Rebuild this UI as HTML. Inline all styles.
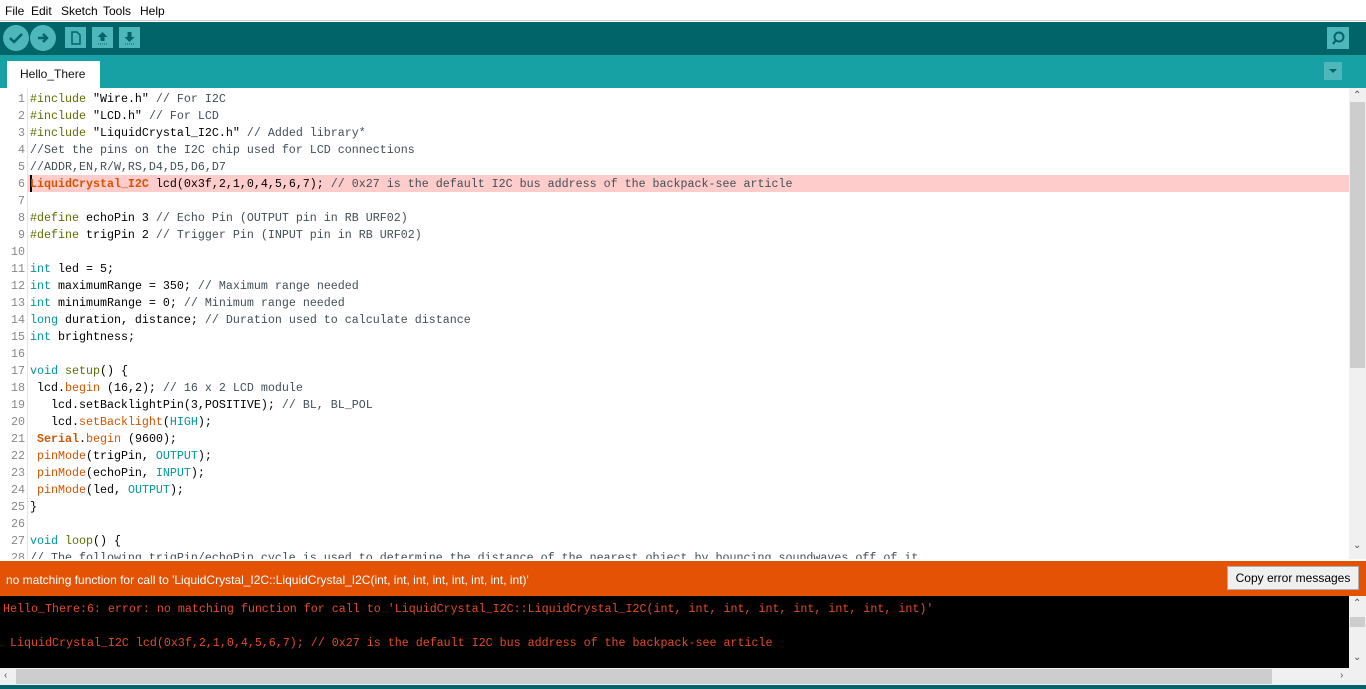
<!DOCTYPE html>
<html><head><meta charset="utf-8"><style>
*{margin:0;padding:0;box-sizing:border-box}
body{width:1366px;height:689px;overflow:hidden;background:#fff;font-family:"Liberation Sans",sans-serif;position:relative}
.menu{position:absolute;top:0;left:0;width:1366px;height:21px;background:#fff;border-bottom:1px solid #c9d3dc;font-size:12px;color:#000}
.menu span{position:absolute;top:4px}
.tb{position:absolute;top:22px;left:0;width:1366px;height:33px;background:#006468}
.tabs{position:absolute;top:55px;left:0;width:1366px;height:33px;background:#17a1a5}
.tab{position:absolute;left:7px;top:6px;width:93px;height:27px;background:#fff;font-size:12px;color:#111;padding:6px 0 0 13px}
.circ{position:absolute;top:3px;width:26px;height:26px;border-radius:50%;background:#4db7bb}
.sq{position:absolute;top:5px;width:21px;height:21px;background:#4db7bb}
.ed{position:absolute;top:88px;left:0;width:1349px;height:471px;overflow:hidden;font-family:"Liberation Mono",monospace;font-size:11.67px;color:#000}
.ln{position:absolute;left:0;width:25px;text-align:right;color:#888}
.gut{position:absolute;left:27px;top:0;width:1px;height:471px;background:#e5e5e5}
.l{position:absolute;left:30px;white-space:pre;height:17px;line-height:17px;margin-top:2px}
.hl{position:absolute;left:28px;top:87px;width:1321px;height:17px;background:#ffcccc}
.k{color:#00979c}.p{color:#5e6d03}.c{color:#434f54}.o{color:#d35400}.b{color:#d35400;font-weight:bold}
.vs{position:absolute;left:1349px;top:88px;width:17px;height:471px;background:#f0f0f0}
.err{position:absolute;top:561px;left:0;width:1366px;height:35px;background:#e35205;color:#fff;font-size:12px}
.btn{position:absolute;left:1227px;top:5px;width:132px;height:24px;background:#f0f0f0;border:1px solid #adadad;color:#000;font-size:12px;text-align:center;line-height:22px}
.con{position:absolute;top:596px;left:0;width:1349px;height:72px;background:#000;font-family:"Liberation Mono",monospace;font-size:11.67px;color:#e34c26;white-space:pre}
.cvs{position:absolute;top:596px;left:1349px;width:17px;height:72px;background:#f0f0f0}
.hs{position:absolute;top:668px;left:0;width:1366px;height:17px;background:#f0f0f0}
.bot{position:absolute;top:685px;left:0;width:1366px;height:4px;background:#006468}
.ar{position:absolute;font-size:10px;color:#555}
</style></head><body>
<div class="menu"><span style="left:5px">File</span><span style="left:31px">Edit</span><span style="left:61px">Sketch</span><span style="left:103px">Tools</span><span style="left:140px">Help</span></div>
<div class="tb">
<div class="circ" style="left:3px"><svg width="26" height="26"><path d="M7 13l4 4 8-8" stroke="#006468" stroke-width="2.5" fill="none"/></svg></div>
<div class="circ" style="left:30px"><svg width="26" height="26"><path d="M8 13h8M13 9l4 4-4 4" stroke="#006468" stroke-width="2.5" fill="none"/></svg></div>
<div class="sq" style="left:65px"><svg width="21" height="21"><path d="M7 5h5l3 3v9H7z" fill="none" stroke="#006468" stroke-width="1.5"/></svg></div>
<div class="sq" style="left:92px"><svg width="21" height="21"><path d="M10.5 5l5 5h-3v4h-4v-4h-3z" fill="#006468"/><path d="M6 17h9" stroke="#006468" stroke-dasharray="1 1"/></svg></div>
<div class="sq" style="left:119px"><svg width="21" height="21"><path d="M10.5 15l5-5h-3V5h-4v5h-3z" fill="#006468"/><path d="M6 17h9" stroke="#006468" stroke-dasharray="1 1"/></svg></div>
<div class="sq" style="left:1327px;width:22px;height:22px"><svg width="22" height="22"><circle cx="12" cy="10" r="4.5" fill="none" stroke="#006468" stroke-width="2"/><path d="M9 13l-3 4" stroke="#006468" stroke-width="2"/></svg></div>
</div>
<div class="tabs"><div class="tab">Hello_There</div>
<div class="sq" style="left:1324px;top:7px;width:18px;height:18px"><svg width="18" height="18"><path d="M5 7h8l-4 4z" fill="#006468"/></svg></div></div>
<div class="ed">
<div class="hl"></div><div class="gut"></div>
<div style="position:absolute;left:30px;top:87px;width:2px;height:17px;background:#000"></div>
<div class="ln" style="top:3px;line-height:17px">1<br>2<br>3<br>4<br>5<br>6<br>7<br>8<br>9<br>10<br>11<br>12<br>13<br>14<br>15<br>16<br>17<br>18<br>19<br>20<br>21<br>22<br>23<br>24<br>25<br>26<br>27<br>28</div>
<div class="l" style="top:1px"><span class="p">#include</span> "Wire.h" <span class="c">// For I2C</span></div>
<div class="l" style="top:18px"><span class="p">#include</span> "LCD.h" <span class="c">// For LCD</span></div>
<div class="l" style="top:35px"><span class="p">#include</span> "LiquidCrystal_I2C.h" <span class="c">// Added library*</span></div>
<div class="l c" style="top:52px">//Set the pins on the I2C chip used for LCD connections</div>
<div class="l c" style="top:69px">//ADDR,EN,R/W,RS,D4,D5,D6,D7</div>
<div class="l" style="top:86px"><span class="b">LiquidCrystal_I2C</span> lcd(0x3f,2,1,0,4,5,6,7); <span class="c">// 0x27 is the default I2C bus address of the backpack-see article</span></div>
<div class="l" style="top:120px"><span class="p">#define</span> echoPin 3 <span class="c">// Echo Pin (OUTPUT pin in RB URF02)</span></div>
<div class="l" style="top:137px"><span class="p">#define</span> trigPin 2 <span class="c">// Trigger Pin (INPUT pin in RB URF02)</span></div>
<div class="l" style="top:171px"><span class="k">int</span> led = 5;</div>
<div class="l" style="top:188px"><span class="k">int</span> maximumRange = 350; <span class="c">// Maximum range needed</span></div>
<div class="l" style="top:205px"><span class="k">int</span> minimumRange = 0; <span class="c">// Minimum range needed</span></div>
<div class="l" style="top:222px"><span class="k">long</span> duration, distance; <span class="c">// Duration used to calculate distance</span></div>
<div class="l" style="top:239px"><span class="k">int</span> brightness;</div>
<div class="l" style="top:273px"><span class="k">void</span> <span class="p">setup</span>() {</div>
<div class="l" style="top:290px"> lcd.<span class="o">begin</span> (16,2); <span class="c">// 16 x 2 LCD module</span></div>
<div class="l" style="top:307px">   lcd.setBacklightPin(3,POSITIVE); <span class="c">// BL, BL_POL</span></div>
<div class="l" style="top:324px">   lcd.<span class="o">setBacklight</span>(<span class="k">HIGH</span>);</div>
<div class="l" style="top:341px"> <span class="b">Serial</span>.<span class="o">begin</span> (9600);</div>
<div class="l" style="top:358px"> <span class="o">pinMode</span>(trigPin, <span class="k">OUTPUT</span>);</div>
<div class="l" style="top:375px"> <span class="o">pinMode</span>(echoPin, <span class="k">INPUT</span>);</div>
<div class="l" style="top:392px"> <span class="o">pinMode</span>(led, <span class="k">OUTPUT</span>);</div>
<div class="l" style="top:409px">}</div>
<div class="l" style="top:443px"><span class="k">void</span> <span class="p">loop</span>() {</div>
<div class="l c" style="top:460px">// The following trigPin/echoPin cycle is used to determine the distance of the nearest object by bouncing soundwaves off of it.</div>
</div>
<div class="vs"><div class="ar" style="left:4px;top:2px">&#8963;</div><div style="position:absolute;left:1px;top:14px;width:15px;height:266px;background:#cdcdcd"></div><div class="ar" style="left:4px;top:452px">&#8964;</div></div>
<div class="err"><div style="position:absolute;left:6px;top:12px">no matching function for call to 'LiquidCrystal_I2C::LiquidCrystal_I2C(int, int, int, int, int, int, int, int)'</div><div class="btn">Copy error messages</div></div>
<div class="con"><div style="position:absolute;left:3px;top:6px">Hello_There:6: error: no matching function for call to 'LiquidCrystal_I2C::LiquidCrystal_I2C(int, int, int, int, int, int, int, int)'</div><div style="position:absolute;left:3px;top:40px"> LiquidCrystal_I2C lcd(0x3f,2,1,0,4,5,6,7); // 0x27 is the default I2C bus address of the backpack-see article</div></div>
<div class="cvs"><div class="ar" style="left:4px;top:2px">&#8963;</div><div style="position:absolute;left:1px;top:21px;width:15px;height:10px;background:#cdcdcd"></div><div class="ar" style="left:4px;top:56px">&#8964;</div></div>
<div class="hs"><div class="ar" style="left:4px;top:2px">&lsaquo;</div><div style="position:absolute;left:16px;top:1px;width:1256px;height:15px;background:#cdcdcd"></div><div class="ar" style="left:1340px;top:2px">&rsaquo;</div></div>
<div class="bot"></div>
</body></html>
